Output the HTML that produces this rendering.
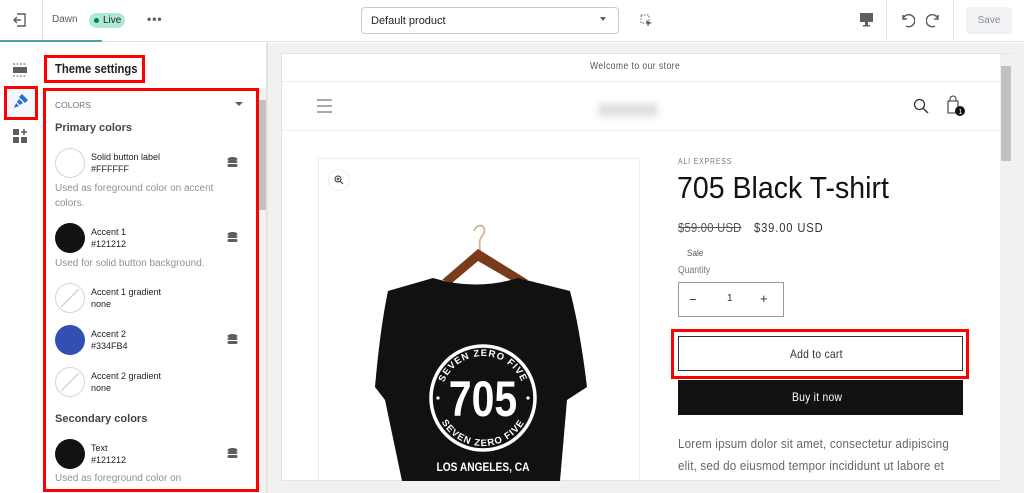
<!DOCTYPE html>
<html><head><meta charset="utf-8"><style>
*{box-sizing:border-box;margin:0;padding:0}
body{width:1024px;height:493px;overflow:hidden;background:#fff;font-family:"Liberation Sans",sans-serif;position:relative;color:#202223}
.a{position:absolute}
.n{transform:scaleX(.86);transform-origin:left top;white-space:nowrap}
.c{width:30px;height:30px;border-radius:50%;left:55px}
.lab{left:91px;font-size:9px;color:#202223;line-height:12px}
.desc{left:55px;font-size:10px;color:#8c9196;line-height:15px}
</style></head><body>
<!-- top bar -->
<div class="a" style="left:0;top:0;width:1024px;height:42px;border-bottom:1px solid #e1e3e5"></div>
<div class="a" style="left:42px;top:0;width:1px;height:42px;background:#e1e3e5"></div>
<div class="a" style="left:0;top:40px;width:102px;height:2px;background:#4da0b0"></div>
<svg class="a" style="left:13px;top:13px" width="14" height="14" viewBox="0 0 14 14"><path d="M4 1h8v12H4M1 7h7M4 4L1 7l3 3" fill="none" stroke="#5c5f62" stroke-width="1.4"/></svg>
<div class="a" style="left:52px;top:14px;font-size:10px;color:#5c5f62">Dawn</div>
<div class="a" style="left:89px;top:13px;width:36px;height:15px;border-radius:8px;background:#aee9d1;font-size:10px;color:#202223;padding-left:14px;line-height:15px">Live</div>
<div class="a" style="left:94px;top:18px;width:5px;height:5px;border-radius:50%;background:#007f5f"></div>
<div class="a" style="left:147px;top:12px;font-size:12px;color:#5c5f62;letter-spacing:1px;font-weight:bold">•••</div>
<div class="a" style="left:361px;top:7px;width:258px;height:27px;border:1px solid #c9cccf;border-radius:4px;font-size:11px;padding:7px 9px;color:#202223">Default product</div>
<div class="a" style="left:600px;top:17px;width:0;height:0;border-left:3.5px solid transparent;border-right:3.5px solid transparent;border-top:4px solid #5c5f62"></div>
<svg class="a" style="left:640px;top:14px" width="13" height="13"><rect x="1" y="1" width="8" height="8" fill="none" stroke="#5c5f62" stroke-dasharray="1.5 1.5"/><path d="M6 6l6 3-3 1-1 3z" fill="#5c5f62"/></svg>
<svg class="a" style="left:860px;top:13px" width="13" height="14"><rect x="0" y="0" width="13" height="9" fill="#5c5f62"/><rect x="5" y="9" width="3" height="3" fill="#5c5f62"/><rect x="3" y="12" width="7" height="1.5" fill="#5c5f62"/></svg>
<div class="a" style="left:886px;top:0;width:1px;height:42px;background:#e1e3e5"></div>
<svg class="a" style="left:899px;top:12px" width="16" height="16"><path d="M4 3v4h4M4 7a6 6 0 1 1 3 7" fill="none" stroke="#5c5f62" stroke-width="1.5"/></svg>
<svg class="a" style="left:926px;top:12px" width="16" height="16"><path d="M12 3v4H8M12 7a6 6 0 1 0-3 7" fill="none" stroke="#5c5f62" stroke-width="1.5"/></svg>
<div class="a" style="left:953px;top:0;width:1px;height:42px;background:#e1e3e5"></div>
<div class="a" style="left:966px;top:7px;width:46px;height:27px;border-radius:4px;background:#f1f2f3;font-size:10px;color:#8c9196;text-align:center;line-height:27px">Save</div>

<!-- left rail -->
<svg class="a" style="left:13px;top:63px" width="14" height="14"><path d="M0 1h14M0 13h14" stroke="#5c5f62" stroke-dasharray="2 1.5"/><rect x="0" y="4" width="14" height="6" fill="#5c5f62"/></svg>
<div class="a" style="left:4px;top:86px;width:34px;height:34px;border:3px solid #f00;background:#f2f7fe"></div>
<svg class="a" style="left:13px;top:93px" width="16" height="16"><path d="M9 1l6 6-3 3-6-6z M6 6l4 4-3 2-3-3z M3 10l3 3-5 2z" fill="#2c6ecb"/></svg>
<svg class="a" style="left:13px;top:129px" width="14" height="14"><rect x="0" y="0" width="6" height="6" fill="#5c5f62"/><rect x="0" y="8" width="6" height="6" fill="#5c5f62"/><rect x="8" y="8" width="6" height="6" fill="#5c5f62"/><path d="M11 0v6M8 3h6" stroke="#5c5f62" stroke-width="1.6"/></svg>

<!-- sidebar -->
<div class="a" style="left:44px;top:55px;width:101px;height:28px;border:3px solid #f00"></div>
<div class="a" style="left:55px;top:62px;font-size:12.5px;font-weight:bold;color:#202223;transform:scaleX(.9);transform-origin:left top;white-space:nowrap">Theme settings</div>
<div class="a" style="left:258px;top:88px;width:9px;height:405px;background:#f1f1f1"></div>
<div class="a" style="left:259px;top:100px;width:7px;height:110px;background:#c1c1c1"></div>
<div class="a" style="left:266px;top:42px;width:2px;height:451px;background:#e1e3e5"></div>
<div class="a" style="left:43px;top:88px;width:216px;height:404px;border:3px solid #f00"></div>
<div class="a" style="left:55px;top:100px;font-size:8.5px;color:#6d7175">COLORS</div>
<div class="a" style="left:235px;top:102px;border-left:4px solid transparent;border-right:4px solid transparent;border-top:4px solid #5c5f62"></div>
<div class="a" style="left:55px;top:122px;font-size:11px;font-weight:bold;color:#444">Primary colors</div>

<div class="a c" style="top:148px;border:1px solid #d2d5d8;background:#fff"></div>
<div class="a lab" style="top:151px">Solid button label<br>#FFFFFF</div>
<div class="a desc" style="top:181px">Used as foreground color on accent<br>colors.</div>

<div class="a c" style="top:223px;background:#121212"></div>
<div class="a lab" style="top:226px">Accent 1<br>#121212</div>
<div class="a desc" style="top:256px">Used for solid button background.</div>

<svg class="a" style="left:55px;top:283px" width="30" height="30"><circle cx="15" cy="15" r="14.5" fill="#fff" stroke="#d2d5d8"/><path d="M6 24L24 6" stroke="#d2d5d8" stroke-width="1.5"/></svg>
<div class="a lab" style="top:286px">Accent 1 gradient<br>none</div>

<div class="a c" style="top:325px;background:#334fb4"></div>
<div class="a lab" style="top:328px">Accent 2<br>#334FB4</div>

<svg class="a" style="left:55px;top:367px" width="30" height="30"><circle cx="15" cy="15" r="14.5" fill="#fff" stroke="#d2d5d8"/><path d="M6 24L24 6" stroke="#d2d5d8" stroke-width="1.5"/></svg>
<div class="a lab" style="top:370px">Accent 2 gradient<br>none</div>

<div class="a" style="left:55px;top:413px;font-size:11px;font-weight:bold;color:#444">Secondary colors</div>
<div class="a c" style="top:439px;background:#121212"></div>
<div class="a lab" style="top:442px">Text<br>#121212</div>
<div class="a desc" style="top:471px">Used as foreground color on</div>

<svg class="a" style="left:227px;top:157px" width="11" height="11"><g fill="#5c5f62"><ellipse cx="5.5" cy="2" rx="5" ry="2"/><rect x=".5" y="3.5" width="10" height="2.5" rx="1.2"/><rect x=".5" y="7" width="10" height="3" rx="1.5"/></g></svg>
<svg class="a" style="left:227px;top:232px" width="11" height="11"><g fill="#5c5f62"><ellipse cx="5.5" cy="2" rx="5" ry="2"/><rect x=".5" y="3.5" width="10" height="2.5" rx="1.2"/><rect x=".5" y="7" width="10" height="3" rx="1.5"/></g></svg>
<svg class="a" style="left:227px;top:334px" width="11" height="11"><g fill="#5c5f62"><ellipse cx="5.5" cy="2" rx="5" ry="2"/><rect x=".5" y="3.5" width="10" height="2.5" rx="1.2"/><rect x=".5" y="7" width="10" height="3" rx="1.5"/></g></svg>
<svg class="a" style="left:227px;top:448px" width="11" height="11"><g fill="#5c5f62"><ellipse cx="5.5" cy="2" rx="5" ry="2"/><rect x=".5" y="3.5" width="10" height="2.5" rx="1.2"/><rect x=".5" y="7" width="10" height="3" rx="1.5"/></g></svg>

<!-- preview -->
<div class="a" style="left:268px;top:43px;width:756px;height:450px;background:#f1f1f1"></div>
<div class="a" style="left:281px;top:53px;width:731px;height:428px;background:#fff;border:1px solid #e4e4e4"></div>
<div class="a" style="left:1000px;top:54px;width:12px;height:427px;background:#f1f1f1"></div>
<div class="a" style="left:1001px;top:66px;width:10px;height:95px;background:#c1c1c1"></div>
<div class="a n" style="left:590px;top:61px;font-size:10px;color:#555;letter-spacing:.5px">Welcome to our store</div>
<div class="a" style="left:282px;top:81px;width:718px;height:1px;background:#eee"></div>
<div class="a" style="left:282px;top:130px;width:718px;height:1px;background:#eee"></div>
<svg class="a" style="left:317px;top:99px" width="16" height="14"><path d="M0 1h15M0 7h15M0 13h15" stroke="#777" stroke-width="1.2"/></svg>
<div class="a" style="left:598px;top:104px;width:60px;height:12px;background:#ddd;filter:blur(4px)"></div>
<svg class="a" style="left:913px;top:98px" width="16" height="16"><circle cx="6.5" cy="6.5" r="5" fill="none" stroke="#333" stroke-width="1.3"/><path d="M10 10l5 5" stroke="#333" stroke-width="1.3"/></svg>
<svg class="a" style="left:945px;top:95px" width="24" height="24"><path d="M3 6h10v12H3z" fill="none" stroke="#333" stroke-width="1.1"/><path d="M5 6V4a3 3 0 0 1 6 0v2" fill="none" stroke="#333"/><circle cx="15" cy="16" r="5" fill="#111"/><text x="13.5" y="19" font-size="7" fill="#fff" font-family="Liberation Sans">1</text></svg>

<div class="a" style="left:318px;top:158px;width:322px;height:330px;border:1px solid #eee"></div>
<div class="a" style="left:328px;top:169px;width:22px;height:22px;border-radius:50%;border:1px solid #eee;background:#fff"></div>
<svg class="a" style="left:334px;top:175px" width="10" height="10"><circle cx="4" cy="4" r="3" fill="none" stroke="#333"/><path d="M6.5 6.5L9 9M2.5 4h3M4 2.5v3" stroke="#333"/></svg>
<svg class="a" style="left:318px;top:159px" width="322" height="322" viewBox="0 0 322 322">
<path d="M156 72c2-6 8-7 10-3 2 5-3 8-4 12-1 4 0 8 0 12" fill="none" stroke="#c9b89a" stroke-width="1.8"/>
<path d="M160 90L124 121L134 124L160 102L198 124L210 121Z" fill="#7a3b1c"/>
<path d="M115 119Q157 132 200 119L252 132Q262 170 269 228L249 241L242 322L84 322L67 241L57 228Q62 170 70 132Z" fill="#111"/>
<circle cx="165" cy="239" r="52" fill="none" stroke="#fff" stroke-width="3.5"/>
<defs><path id="t1" d="M123 239A42 42 0 0 1 207 239"/><path id="t2" d="M117 239A48 48 0 0 0 213 239"/></defs>
<text font-family="Liberation Sans" font-weight="bold" font-size="9.5" fill="#fff" letter-spacing="1"><textPath href="#t1" startOffset="50%" text-anchor="middle">SEVEN ZERO FIVE</textPath></text>
<text font-family="Liberation Sans" font-weight="bold" font-size="9.5" fill="#fff" letter-spacing="1"><textPath href="#t2" startOffset="50%" text-anchor="middle">SEVEN ZERO FIVE</textPath></text>
<circle cx="120" cy="239" r="1.6" fill="#fff"/><circle cx="210" cy="239" r="1.6" fill="#fff"/>
<text x="165" y="257" text-anchor="middle" font-family="Liberation Sans" font-weight="bold" font-size="50" fill="#fff" transform="translate(165 0) scale(.82 1) translate(-165 0)">705</text>
<text x="165" y="312" text-anchor="middle" font-family="Liberation Sans" font-weight="bold" font-size="12" fill="#fff" transform="translate(165 0) scale(.85 1) translate(-165 0)">LOS ANGELES, CA</text>
</svg>

<div class="a n" style="left:678px;top:157px;font-size:8px;color:#777;letter-spacing:1px">ALI EXPRESS</div>
<div class="a n" style="left:677px;top:170px;font-size:31px;color:#121212;transform:scaleX(.92)">705 Black T-shirt</div>
<div class="a n" style="left:678px;top:220px;font-size:13px;color:#555;text-decoration:line-through;letter-spacing:.3px">$59.00 USD</div>
<div class="a n" style="left:754px;top:220px;font-size:13px;color:#333;letter-spacing:1px">$39.00 USD</div>
<div class="a n" style="left:687px;top:248px;font-size:9.5px;color:#555">Sale</div>
<div class="a n" style="left:678px;top:265px;font-size:10px;color:#777">Quantity</div>
<div class="a" style="left:678px;top:282px;width:106px;height:35px;border:1px solid #999"></div>
<div class="a" style="left:689px;top:292px;font-size:13px;color:#333">−</div>
<div class="a" style="left:727px;top:293px;font-size:10px;color:#333">1</div>
<div class="a" style="left:760px;top:291px;font-size:13px;color:#333">+</div>
<div class="a" style="left:671px;top:329px;width:298px;height:50px;border:3px solid #f00"></div>
<div class="a" style="left:678px;top:336px;width:285px;height:35px;border:1px solid #333"></div>
<div class="a n" style="left:790px;top:347px;font-size:12px;color:#333;letter-spacing:.3px">Add to cart</div>
<div class="a" style="left:678px;top:380px;width:285px;height:35px;background:#121212"></div>
<div class="a n" style="left:792px;top:390px;font-size:12px;color:#fff;letter-spacing:.3px">Buy it now</div>
<div class="a n" style="left:678px;top:433px;font-size:12.5px;color:#666;line-height:22px;letter-spacing:.2px;transform:scaleX(.93)">Lorem ipsum dolor sit amet, consectetur adipiscing<br>elit, sed do eiusmod tempor incididunt ut labore et</div>
</body></html>
